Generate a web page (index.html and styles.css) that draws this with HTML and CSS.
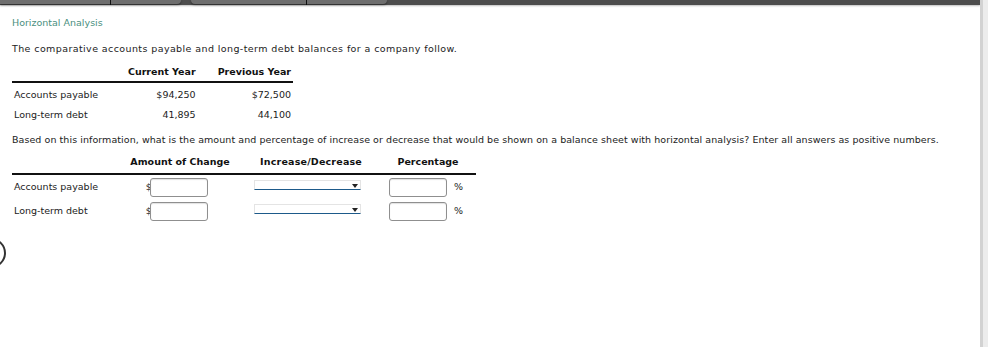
FILE: index.html
```html
<!DOCTYPE html>
<html lang="en">
  <head>
    <meta charset="UTF-8" />
    <title>Horizontal Analysis</title>
    <link rel="stylesheet" href="styles.css">
  </head>
  <body>
    <div class="page">
      <div class="main">
        <div class="topbar">
          <div class="tab tab-first"><span class="divider"></span></div>
          <div class="tab tab-second"><span class="divider"></span></div>
        </div>

        <div class="content">
          <h2 class="title">Horizontal Analysis</h2>
          <p class="text intro">The comparative accounts payable and long-term debt balances for a company follow.</p>

          <table class="balances">
            <thead>
              <tr>
                <th class="label-col"></th>
                <th class="num-col cur">Current Year</th>
                <th class="num-col prev">Previous Year</th>
              </tr>
            </thead>
            <tbody>
              <tr>
                <td>Accounts payable</td>
                <td class="num">$94,250</td>
                <td class="num">$72,500</td>
              </tr>
              <tr>
                <td>Long-term debt</td>
                <td class="num">41,895</td>
                <td class="num">44,100</td>
              </tr>
            </tbody>
          </table>

          <p class="text question">Based on this information, what is the amount and percentage of increase or decrease that would be shown on a balance sheet with horizontal analysis? Enter all answers as positive numbers.</p>

          <table class="answers">
            <thead>
              <tr>
                <th class="label-col"></th>
                <th class="amt-col">Amount of Change</th>
                <th class="dir-col">Increase/Decrease</th>
                <th class="pct-col">Percentage</th>
              </tr>
            </thead>
            <tbody>
              <tr>
                <td>Accounts payable</td>
                <td class="center"><span class="cur-sign">$</span><input class="box" type="text" /></td>
                <td class="center">
                  <span class="pick"><select class="choice"><option></option><option>Increase</option><option>Decrease</option></select></span>
                </td>
                <td class="center"><input class="box" type="text" /><span class="pct">%</span></td>
              </tr>
              <tr>
                <td>Long-term debt</td>
                <td class="center"><span class="cur-sign">$</span><input class="box" type="text" /></td>
                <td class="center">
                  <span class="pick"><select class="choice"><option></option><option>Increase</option><option>Decrease</option></select></span>
                </td>
                <td class="center"><input class="box" type="text" /><span class="pct">%</span></td>
              </tr>
            </tbody>
          </table>
        </div>

        <div class="ring"></div>
      </div>
      <div class="side"></div>
    </div>
  </body>
</html>
```

FILE: styles.css
```css
html,
body {
  margin: 0;
  padding: 0;
  height: 100%;
  background: #ffffff;
}
body {
  font-family: "DejaVu Sans", Verdana, sans-serif;
  font-size: 9.5px;
  color: #222;
  overflow: hidden;
}
.page {
  display: flex;
  height: 347px;
}
.main {
  position: relative;
  width: 980px;
  background: #fff;
  overflow: hidden;
}
.side {
  flex: 1;
  background: #ececec;
  border-left: 3px solid #d2d2d2;
}

/* dark strip with the two tabs hanging from it */
.topbar {
  display: flex;
  height: 5px;
  background: #4d4d4d;
  box-shadow: 0 1px 2px rgba(0, 0, 0, 0.25);
}
.tab {
  position: relative;
  height: 4px;
  background: #6e6e6e;
  border-radius: 0 0 4px 4px;
  box-shadow: 0 1px 2px rgba(0, 0, 0, 0.45);
}
.tab-first {
  width: 181px;
  border-radius: 0 0 4px 0;
}
.tab-second {
  width: 196px;
  margin-left: 10px;
}
.divider {
  position: absolute;
  top: 0;
  width: 1px;
  height: 5px;
  background: #111;
}
.tab-first .divider {
  left: 110px;
}
.tab-second .divider {
  left: 115px;
}

.content {
  padding: 0 12px;
}
.title {
  margin: 11px 0 0;
  font-size: 9.5px;
  font-weight: normal;
  line-height: 14px;
  color: #4a8f80;
}
.text {
  margin: 12px 0 0;
  line-height: 14px;
}
.intro {
  letter-spacing: 0.4px;
}
.question {
  margin-top: 10px;
  letter-spacing: 0.06px;
}

table {
  border-collapse: collapse;
  line-height: 14px;
}
th {
  font-weight: bold;
  padding: 3px 0 3px;
  border-bottom: 2px solid #111;
  color: #111;
}

.balances {
  margin-top: 6px;
  width: 281px;
}
.balances th {
  padding-bottom: 2px;
}
.balances .label-col {
  width: 108px;
}
.balances .cur {
  width: 77px;
  text-align: right;
}
.balances .prev {
  width: 96px;
  text-align: right;
  padding-right: 2px;
}
.balances td {
  padding: 5px 0 1px 2px;
}
.balances td.num {
  text-align: right;
}
.balances td:last-child {
  padding-right: 2px;
}

.answers {
  margin-top: 5px;
  width: 464px;
}
.answers th {
  padding: 3px 0 4px 2px;
}
.answers .label-col {
  width: 108px;
}
.answers .amt-col {
  width: 110px;
  padding-left: 3px;
}
.answers .dir-col {
  width: 144px;
  padding-left: 4px;
  letter-spacing: 0.2px;
}
.answers .pct-col {
  padding-right: 5px;
}
.answers td {
  height: 24px;
  padding: 0 0 0 2px;
}
.answers td.center {
  text-align: center;
  white-space: nowrap;
  padding: 0 3px 0 0;
}
.answers td.center:last-child {
  padding-right: 7px;
}

.cur-sign {
  display: inline-block;
  vertical-align: middle;
  font-size: 9px;
  margin-right: -1px;
}
.box {
  box-sizing: border-box;
  width: 58px;
  height: 19px;
  margin: 0;
  padding: 0 3px;
  vertical-align: middle;
  border: 1px solid #8f8f8f;
  border-radius: 3px;
  box-shadow: inset 0 1px 1px rgba(0, 0, 0, 0.12);
  font: inherit;
}
.pct {
  display: inline-block;
  vertical-align: middle;
  margin-left: 7px;
}

.pick {
  position: relative;
  display: inline-block;
  vertical-align: middle;
}
.pick::after {
  content: "";
  position: absolute;
  right: 3px;
  top: 4px;
  border-left: 3px solid transparent;
  border-right: 3px solid transparent;
  border-top: 4px solid #222;
  pointer-events: none;
}
.choice {
  appearance: none;
  -webkit-appearance: none;
  box-sizing: border-box;
  width: 107px;
  height: 10px;
  margin: 0;
  padding: 0;
  background: #fff;
  border: 1px solid #e4e4e4;
  border-bottom: 1px solid #1d5a8a;
  border-radius: 0;
  font: inherit;
  font-size: 8px;
}

/* edge of a round control peeking in from the left */
.ring {
  position: absolute;
  left: -24px;
  top: 238px;
  width: 26px;
  height: 26px;
  border: 2px solid #333;
  border-radius: 50%;
}
```
